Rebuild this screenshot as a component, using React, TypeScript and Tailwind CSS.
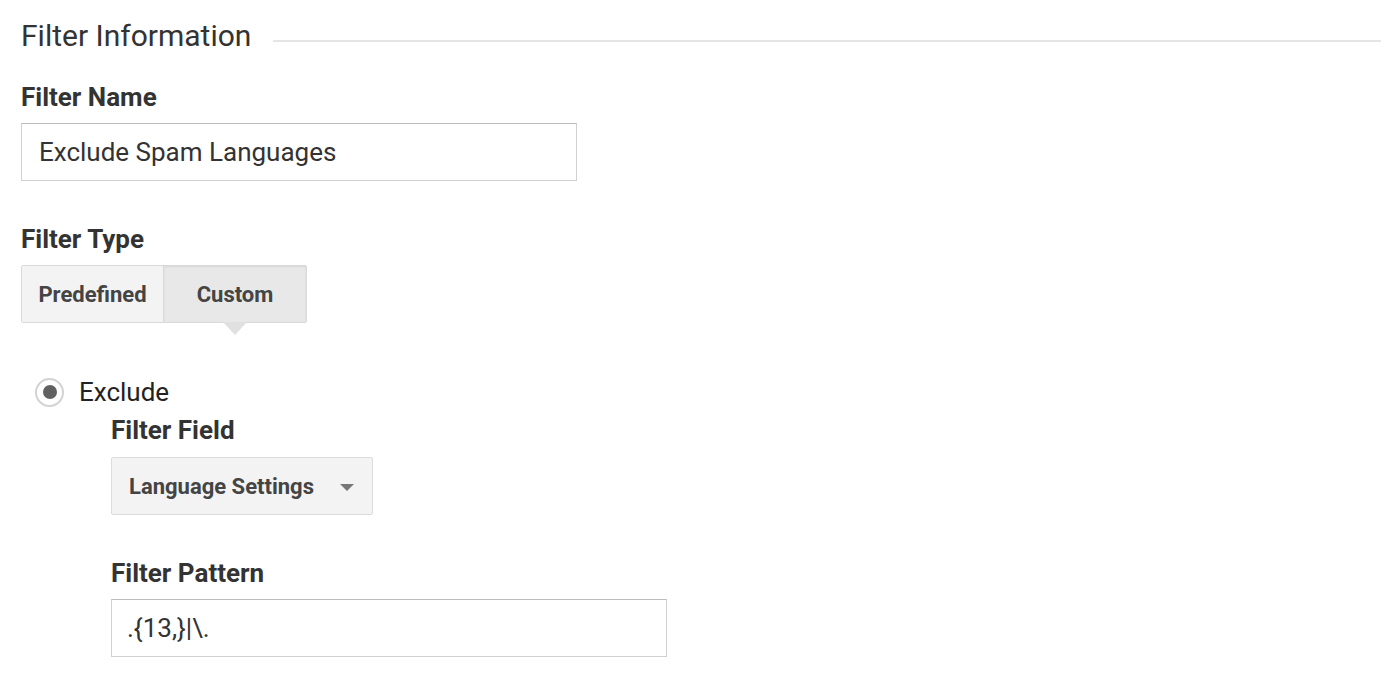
import React from "react";

function Label({ children, className = "" }: { children: React.ReactNode; className?: string }) {
  return <div className={"text-[26px] leading-[30px] font-bold text-[#333] " + className}>{children}</div>;
}

export default function App() {
  return (
    <div className="min-h-screen bg-white font-['Roboto',sans-serif] text-[#333]">
      <div className="pl-[21px] pt-[19px]">
        {/* Section title */}
        <div className="flex items-center">
          <h2 className="text-[30px] leading-[34px] font-normal text-[#333]">Filter Information</h2>
          <div className="ml-[22px] mt-[10px] h-[2px] flex-1 bg-[#e5e5e5]" />
        </div>

        <Label className="mt-[29px]">Filter Name</Label>
        <div className="mt-[11px] flex h-[58px] w-[556px] items-center border border-[#d0d0d0] border-t-[#bdbdbd] px-[17px] text-[26px] text-[#333]">
          Exclude Spam Languages
        </div>

        <Label className="mt-[43px]">Filter Type</Label>
        <div className="relative mt-[11px] flex h-[58px] w-[286px] rounded-[2px] border border-[#d9d9d9] text-[22px] font-bold text-[#444]">
          <div className="flex w-[142px] items-center justify-center bg-[#f3f3f3] border-r border-[#d9d9d9]">Predefined</div>
          <div className="relative flex flex-1 items-center justify-center bg-[#e8e8e8] shadow-[inset_0_1px_2px_rgba(0,0,0,0.08)]">
            Custom
            <div className="absolute left-1/2 top-full -translate-x-1/2 border-x-[12px] border-t-[13px] border-x-transparent border-t-[#e0e0e0]" />
          </div>
        </div>

        {/* Exclude option */}
        <div className="mt-[54px] flex items-center pl-[14px]">
          <div className="flex h-[29px] w-[29px] items-center justify-center rounded-full border-2 border-[#d3d3d3] bg-white">
            <div className="h-[14px] w-[14px] rounded-full bg-[#616161]" />
          </div>
          <span className="ml-[15px] text-[26px] leading-[30px] text-[#222]">Exclude</span>
        </div>

        <div className="pl-[90px]">
          <Label className="mt-[8px]">Filter Field</Label>
          <div className="mt-[12px] flex h-[58px] w-[262px] items-center justify-between rounded-[2px] border border-[#dcdcdc] bg-[#f3f3f3] pl-[17px] pr-[18px] text-[22px] font-bold text-[#444]">
            Language Settings
            <span className="mt-[2px] border-x-[7px] border-t-[7px] border-x-transparent border-t-[#777]" />
          </div>

          <Label className="mt-[43px]">Filter Pattern</Label>
          <div className="mt-[11px] flex h-[58px] w-[556px] items-center border border-[#d0d0d0] border-t-[#bdbdbd] px-[15px] text-[26px] text-[#333]">
            .{"{"}13,{"}"}|\.
          </div>
        </div>
      </div>
    </div>
  );
}
